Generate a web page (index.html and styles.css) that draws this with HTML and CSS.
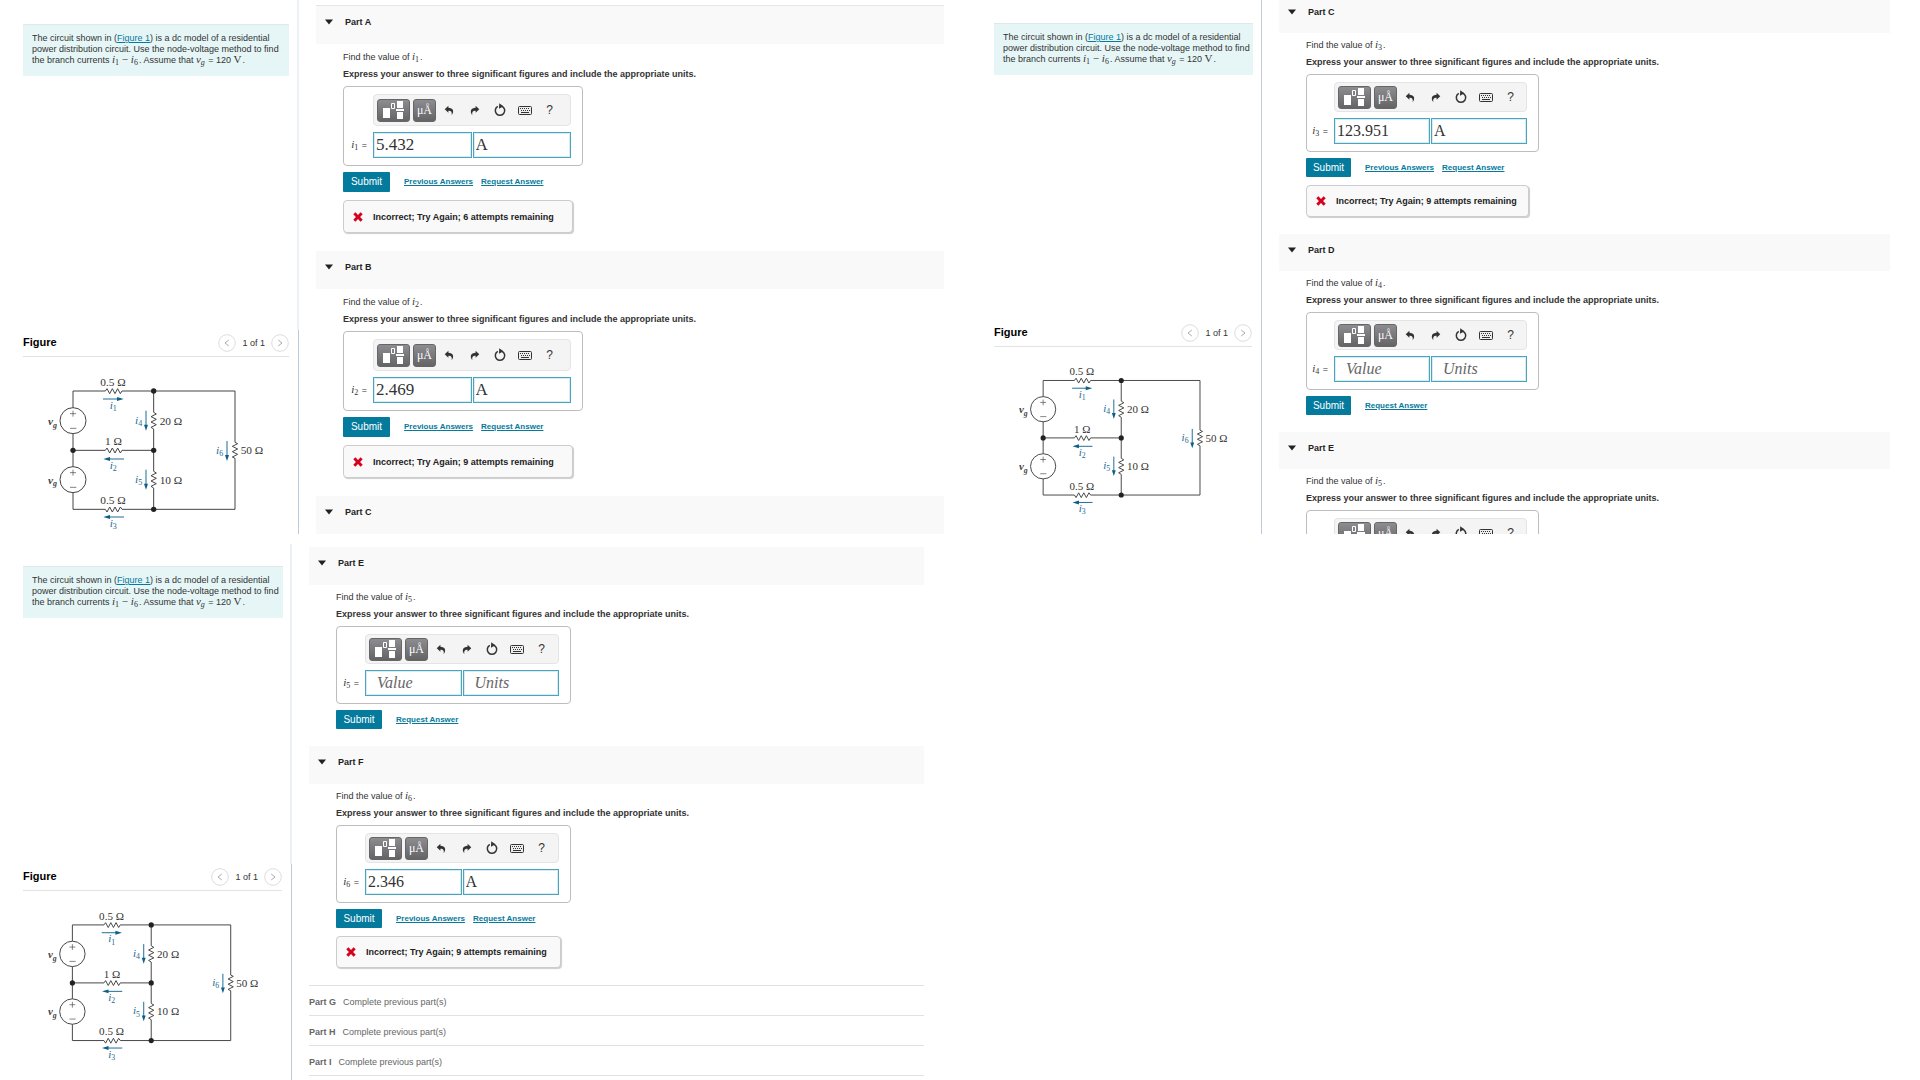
FILE: index.html
```html
<!DOCTYPE html>
<html lang="en">
<head>
<meta charset="utf-8">
<meta name="viewport" content="width=device-width, initial-scale=1">
<title>Residential power distribution circuit</title>
<link rel="stylesheet" href="styles.css">
</head>
<body>
<svg class="sprite" aria-hidden="true">
  <symbol id="caret" viewBox="0 0 8 6"><path d="M0 0.5h8L4 5.5z"/></symbol>
  <symbol id="template" viewBox="0 0 24 21">
    <path fill="#fff" d="M1 8h7v10H1zM15 1h6v7h-6zM15 12h6v7h-6zM14 9h8v2h-8z"/>
    <path fill="none" stroke="#fff" d="M9.500 3.500h3v5h-3z"/>
  </symbol>
  <symbol id="undo" viewBox="0 0 12 12"><path d="M4.800 0.800L0.800 4.600l4 3.800V6.200c2.800-.3 4.200 1.200 3.600 5C11.600 7 9.800 3 4.800 3z"/></symbol>
  <symbol id="redo" viewBox="0 0 12 12"><path d="M7.200 0.800l4 3.800-4 3.800V6.200c-2.800-.3-4.200 1.200-3.600 5C.4 7 2.200 3 7.200 3z"/></symbol>
  <symbol id="reset" viewBox="0 0 12 14"><path fill="none" stroke="currentColor" stroke-width="1.500" d="M7.800 3.200a4.700 4.700 0 1 1-4 .2"/><path d="M5.200 0.200l4.200 3-4.400 2.600z"/></symbol>
  <symbol id="keyboard" viewBox="0 0 14 10"><rect x="0.500" y="0.500" width="13" height="8" rx="1" fill="#eee" stroke="currentColor"/><path stroke="currentColor" fill="none" stroke-dasharray="1 1" d="M2 2.500h10M3 4.500h9"/><path stroke="currentColor" d="M3 6.500h8"/></symbol>
  <symbol id="cross" viewBox="0 0 10 10"><path d="M0.300 2.200L2.400 0.300 5 2.900 7.600 0.300l2.100 1.900L7.100 5l2.600 2.800-2.100 1.900L5 7.100 2.400 9.700.3 7.800 2.900 5z"/></symbol>
  <symbol id="prev" viewBox="0 0 18 18"><circle cx="9" cy="9" r="8.300" fill="none" stroke="#ddd"/><path d="M10.800 6L7 9l3.800 3" fill="none" stroke="#aaa"/></symbol>
  <symbol id="next" viewBox="0 0 18 18"><circle cx="9" cy="9" r="8.300" fill="none" stroke="#ddd"/><path d="M7.200 6L11 9l-3.800 3" fill="none" stroke="#aaa"/></symbol>
  <symbol id="wires" viewBox="140 190 660 480">
    <g fill="none" stroke="#444" stroke-width="3">
      <path d="M221 294V244H318l5-7 8 15 8-15 8 15 8-15 8 15 5-8H707V398l8 4-16 8 16 8-16 8 16 8-16 8 8 4V599H368l-5-7-8 15-8-15-8 15-8-15-8 15-5-8H221V549"/>
      <path d="M221 372V471M221 422H318l5-7 8 15 8-15 8 15 8-15 8 15 5-8H463"/>
      <path d="M463 244V308l8 5-16 8 16 8-16 8 16 8-16 8 8 5V485l8 5-16 8 16 8-16 8 16 8-16 8 8 5V599"/>
      <circle cx="221" cy="333" r="39"/><circle cx="221" cy="510" r="39"/>
      <path stroke-width="2" d="M212 312h18M221 303v18M212 356h19M212 489h18M221 480v18M212 533h19"/>
    </g>
    <g fill="#222"><circle cx="463" cy="244" r="8"/><circle cx="221" cy="422" r="8"/><circle cx="463" cy="422" r="8"/><circle cx="463" cy="599" r="8"/></g>
    <g fill="none" stroke="#1c6a93" stroke-width="3"><path d="M311 268h44M374 448h-44M374 622h-44M440 303v44M440 480v44M683 394v44"/></g>
    <path fill="#0d5f88" d="M373 268l-20-6v12zM312 448l20-6v12zM312 622l20-6v12zM440 363l-6-18h12zM440 540l-6-18h12zM683 454l-6-18h12z"/>
  </symbol>
</svg>

<main class="sheet">
  <section class="capture capture-first">
    <aside class="side">
      <div class="side-top">
        <p class="prompt">The circuit shown in (<a href="#figure-1">Figure 1</a>) is a dc model of a residential power distribution circuit. Use the node-voltage method to find the branch currents <span class="m"><i>i</i><sub>1</sub> − <i>i</i><sub>6</sub></span>. Assume that <span class="m"><i>v</i><sub><i>g</i></sub></span> = 120 <span class="m">V</span>.</p>
      </div>
      <div class="side-figure" id="figure-1">
        <div class="figure-head"><h2>Figure</h2><div class="pager"><button aria-label="Previous figure"><svg><use href="#prev"/></svg></button><span>1 of 1</span><button aria-label="Next figure"><svg><use href="#next"/></svg></button></div></div>
        <svg class="circuit" viewBox="140 190 660 480">
          <use href="#wires" x="140" y="190" width="660" height="480"/>
          <g class="ohm"><text x="303" y="228">0.5 Ω</text><text x="317" y="406">1 Ω</text><text x="303" y="582">0.5 Ω</text><text x="481" y="346">20 Ω</text><text x="481" y="522">10 Ω</text><text x="724" y="434">50 Ω</text></g>
          <g class="src"><text x="146" y="346">v<tspan class="s" dy="8">g</tspan></text><text x="146" y="522">v<tspan class="s" dy="8">g</tspan></text></g>
          <g class="cur"><text x="331" y="298">i<tspan class="n" dy="7">1</tspan></text><text x="331" y="478">i<tspan class="n" dy="7">2</tspan></text><text x="331" y="652">i<tspan class="n" dy="7">3</tspan></text><text x="407" y="342">i<tspan class="n" dy="7">4</tspan></text><text x="407" y="519">i<tspan class="n" dy="7">5</tspan></text><text x="650" y="432">i<tspan class="n" dy="7">6</tspan></text></g>
        </svg>
      </div>
    </aside>
    <div class="parts">
      <section class="part part-top">
        <h2><button class="part-toggle"><svg><use href="#caret"/></svg>Part A</button></h2>
        <div class="part-body">
          <p>Find the value of <span class="m"><i>i</i><sub>1</sub></span>.</p>
          <p class="rule">Express your answer to three significant figures and include the appropriate units.</p>
          <div class="answer">
            <div class="tools"><button class="key key-wide" aria-label="Templates"><svg><use href="#template"/></svg></button><button class="key">μÅ</button><button class="tool" aria-label="Undo"><svg><use href="#undo"/></svg></button><button class="tool" aria-label="Redo"><svg><use href="#redo"/></svg></button><button class="tool" aria-label="Reset"><svg class="tall"><use href="#reset"/></svg></button><button class="tool" aria-label="Keyboard"><svg class="wide"><use href="#keyboard"/></svg></button><button class="tool">?</button></div>
            <label for="a1"><span class="m"><i>i</i><sub>1</sub></span> =</label>
            <div class="fields"><input id="a1" type="text" value="5.432"><input type="text" aria-label="Units" value="A"></div>
          </div>
          <div class="actions"><button class="submit">Submit</button><a href="#">Previous Answers</a><a href="#">Request Answer</a></div>
          <p class="feedback"><svg><use href="#cross"/></svg>Incorrect; Try Again; 6 attempts remaining</p>
        </div>
      </section>
      <section class="part">
        <h2><button class="part-toggle"><svg><use href="#caret"/></svg>Part B</button></h2>
        <div class="part-body">
          <p>Find the value of <span class="m"><i>i</i><sub>2</sub></span>.</p>
          <p class="rule">Express your answer to three significant figures and include the appropriate units.</p>
          <div class="answer">
            <div class="tools"><button class="key key-wide" aria-label="Templates"><svg><use href="#template"/></svg></button><button class="key">μÅ</button><button class="tool" aria-label="Undo"><svg><use href="#undo"/></svg></button><button class="tool" aria-label="Redo"><svg><use href="#redo"/></svg></button><button class="tool" aria-label="Reset"><svg class="tall"><use href="#reset"/></svg></button><button class="tool" aria-label="Keyboard"><svg class="wide"><use href="#keyboard"/></svg></button><button class="tool">?</button></div>
            <label for="a2"><span class="m"><i>i</i><sub>2</sub></span> =</label>
            <div class="fields"><input id="a2" type="text" value="2.469"><input type="text" aria-label="Units" value="A"></div>
          </div>
          <div class="actions"><button class="submit">Submit</button><a href="#">Previous Answers</a><a href="#">Request Answer</a></div>
          <p class="feedback"><svg><use href="#cross"/></svg>Incorrect; Try Again; 9 attempts remaining</p>
        </div>
      </section>
      <section class="part">
        <h2><button class="part-toggle"><svg><use href="#caret"/></svg>Part C</button></h2>
      </section>
    </div>
  </section>

  <section class="capture capture-second">
    <aside class="side">
      <div class="side-top">
        <p class="prompt">The circuit shown in (<a href="#figure-2">Figure 1</a>) is a dc model of a residential power distribution circuit. Use the node-voltage method to find the branch currents <span class="m"><i>i</i><sub>1</sub> − <i>i</i><sub>6</sub></span>. Assume that <span class="m"><i>v</i><sub><i>g</i></sub></span> = 120 <span class="m">V</span>.</p>
      </div>
      <div class="side-figure" id="figure-2">
        <div class="figure-head"><h2>Figure</h2><div class="pager"><button aria-label="Previous figure"><svg><use href="#prev"/></svg></button><span>1 of 1</span><button aria-label="Next figure"><svg><use href="#next"/></svg></button></div></div>
        <svg class="circuit" viewBox="140 190 660 480">
          <use href="#wires" x="140" y="190" width="660" height="480"/>
          <g class="ohm"><text x="303" y="228">0.5 Ω</text><text x="317" y="406">1 Ω</text><text x="303" y="582">0.5 Ω</text><text x="481" y="346">20 Ω</text><text x="481" y="522">10 Ω</text><text x="724" y="434">50 Ω</text></g>
          <g class="src"><text x="146" y="346">v<tspan class="s" dy="8">g</tspan></text><text x="146" y="522">v<tspan class="s" dy="8">g</tspan></text></g>
          <g class="cur"><text x="331" y="298">i<tspan class="n" dy="7">1</tspan></text><text x="331" y="478">i<tspan class="n" dy="7">2</tspan></text><text x="331" y="652">i<tspan class="n" dy="7">3</tspan></text><text x="407" y="342">i<tspan class="n" dy="7">4</tspan></text><text x="407" y="519">i<tspan class="n" dy="7">5</tspan></text><text x="650" y="432">i<tspan class="n" dy="7">6</tspan></text></g>
        </svg>
      </div>
    </aside>
    <div class="parts">
      <section class="part">
        <h2><button class="part-toggle"><svg><use href="#caret"/></svg>Part C</button></h2>
        <div class="part-body">
          <p>Find the value of <span class="m"><i>i</i><sub>3</sub></span>.</p>
          <p class="rule">Express your answer to three significant figures and include the appropriate units.</p>
          <div class="answer">
            <div class="tools"><button class="key key-wide" aria-label="Templates"><svg><use href="#template"/></svg></button><button class="key">μÅ</button><button class="tool" aria-label="Undo"><svg><use href="#undo"/></svg></button><button class="tool" aria-label="Redo"><svg><use href="#redo"/></svg></button><button class="tool" aria-label="Reset"><svg class="tall"><use href="#reset"/></svg></button><button class="tool" aria-label="Keyboard"><svg class="wide"><use href="#keyboard"/></svg></button><button class="tool">?</button></div>
            <label for="a3"><span class="m"><i>i</i><sub>3</sub></span> =</label>
            <div class="fields"><input id="a3" type="text" value="123.951"><input type="text" aria-label="Units" value="A"></div>
          </div>
          <div class="actions"><button class="submit">Submit</button><a href="#">Previous Answers</a><a href="#">Request Answer</a></div>
          <p class="feedback"><svg><use href="#cross"/></svg>Incorrect; Try Again; 9 attempts remaining</p>
        </div>
      </section>
      <section class="part">
        <h2><button class="part-toggle"><svg><use href="#caret"/></svg>Part D</button></h2>
        <div class="part-body">
          <p>Find the value of <span class="m"><i>i</i><sub>4</sub></span>.</p>
          <p class="rule">Express your answer to three significant figures and include the appropriate units.</p>
          <div class="answer">
            <div class="tools"><button class="key key-wide" aria-label="Templates"><svg><use href="#template"/></svg></button><button class="key">μÅ</button><button class="tool" aria-label="Undo"><svg><use href="#undo"/></svg></button><button class="tool" aria-label="Redo"><svg><use href="#redo"/></svg></button><button class="tool" aria-label="Reset"><svg class="tall"><use href="#reset"/></svg></button><button class="tool" aria-label="Keyboard"><svg class="wide"><use href="#keyboard"/></svg></button><button class="tool">?</button></div>
            <label for="a4"><span class="m"><i>i</i><sub>4</sub></span> =</label>
            <div class="fields"><input id="a4" type="text" placeholder="Value"><input type="text" aria-label="Units" placeholder="Units"></div>
          </div>
          <div class="actions"><button class="submit">Submit</button><a href="#">Request Answer</a></div>
        </div>
      </section>
      <section class="part">
        <h2><button class="part-toggle"><svg><use href="#caret"/></svg>Part E</button></h2>
        <div class="part-body">
          <p>Find the value of <span class="m"><i>i</i><sub>5</sub></span>.</p>
          <p class="rule">Express your answer to three significant figures and include the appropriate units.</p>
          <div class="answer">
            <div class="tools"><button class="key key-wide" aria-label="Templates"><svg><use href="#template"/></svg></button><button class="key">μÅ</button><button class="tool" aria-label="Undo"><svg><use href="#undo"/></svg></button><button class="tool" aria-label="Redo"><svg><use href="#redo"/></svg></button><button class="tool" aria-label="Reset"><svg class="tall"><use href="#reset"/></svg></button><button class="tool" aria-label="Keyboard"><svg class="wide"><use href="#keyboard"/></svg></button><button class="tool">?</button></div>
          </div>
        </div>
      </section>
    </div>
  </section>

  <section class="capture capture-third">
    <aside class="side">
      <div class="side-top">
        <p class="prompt">The circuit shown in (<a href="#figure-3">Figure 1</a>) is a dc model of a residential power distribution circuit. Use the node-voltage method to find the branch currents <span class="m"><i>i</i><sub>1</sub> − <i>i</i><sub>6</sub></span>. Assume that <span class="m"><i>v</i><sub><i>g</i></sub></span> = 120 <span class="m">V</span>.</p>
      </div>
      <div class="side-figure" id="figure-3">
        <div class="figure-head"><h2>Figure</h2><div class="pager"><button aria-label="Previous figure"><svg><use href="#prev"/></svg></button><span>1 of 1</span><button aria-label="Next figure"><svg><use href="#next"/></svg></button></div></div>
        <svg class="circuit" viewBox="140 190 660 480">
          <use href="#wires" x="140" y="190" width="660" height="480"/>
          <g class="ohm"><text x="303" y="228">0.5 Ω</text><text x="317" y="406">1 Ω</text><text x="303" y="582">0.5 Ω</text><text x="481" y="346">20 Ω</text><text x="481" y="522">10 Ω</text><text x="724" y="434">50 Ω</text></g>
          <g class="src"><text x="146" y="346">v<tspan class="s" dy="8">g</tspan></text><text x="146" y="522">v<tspan class="s" dy="8">g</tspan></text></g>
          <g class="cur"><text x="331" y="298">i<tspan class="n" dy="7">1</tspan></text><text x="331" y="478">i<tspan class="n" dy="7">2</tspan></text><text x="331" y="652">i<tspan class="n" dy="7">3</tspan></text><text x="407" y="342">i<tspan class="n" dy="7">4</tspan></text><text x="407" y="519">i<tspan class="n" dy="7">5</tspan></text><text x="650" y="432">i<tspan class="n" dy="7">6</tspan></text></g>
        </svg>
      </div>
    </aside>
    <div class="parts">
      <section class="part">
        <h2><button class="part-toggle"><svg><use href="#caret"/></svg>Part E</button></h2>
        <div class="part-body">
          <p>Find the value of <span class="m"><i>i</i><sub>5</sub></span>.</p>
          <p class="rule">Express your answer to three significant figures and include the appropriate units.</p>
          <div class="answer">
            <div class="tools"><button class="key key-wide" aria-label="Templates"><svg><use href="#template"/></svg></button><button class="key">μÅ</button><button class="tool" aria-label="Undo"><svg><use href="#undo"/></svg></button><button class="tool" aria-label="Redo"><svg><use href="#redo"/></svg></button><button class="tool" aria-label="Reset"><svg class="tall"><use href="#reset"/></svg></button><button class="tool" aria-label="Keyboard"><svg class="wide"><use href="#keyboard"/></svg></button><button class="tool">?</button></div>
            <label for="a5"><span class="m"><i>i</i><sub>5</sub></span> =</label>
            <div class="fields"><input id="a5" type="text" placeholder="Value"><input type="text" aria-label="Units" placeholder="Units"></div>
          </div>
          <div class="actions"><button class="submit">Submit</button><a href="#">Request Answer</a></div>
        </div>
      </section>
      <section class="part">
        <h2><button class="part-toggle"><svg><use href="#caret"/></svg>Part F</button></h2>
        <div class="part-body">
          <p>Find the value of <span class="m"><i>i</i><sub>6</sub></span>.</p>
          <p class="rule">Express your answer to three significant figures and include the appropriate units.</p>
          <div class="answer">
            <div class="tools"><button class="key key-wide" aria-label="Templates"><svg><use href="#template"/></svg></button><button class="key">μÅ</button><button class="tool" aria-label="Undo"><svg><use href="#undo"/></svg></button><button class="tool" aria-label="Redo"><svg><use href="#redo"/></svg></button><button class="tool" aria-label="Reset"><svg class="tall"><use href="#reset"/></svg></button><button class="tool" aria-label="Keyboard"><svg class="wide"><use href="#keyboard"/></svg></button><button class="tool">?</button></div>
            <label for="a6"><span class="m"><i>i</i><sub>6</sub></span> =</label>
            <div class="fields"><input id="a6" type="text" value="2.346"><input type="text" aria-label="Units" value="A"></div>
          </div>
          <div class="actions"><button class="submit">Submit</button><a href="#">Previous Answers</a><a href="#">Request Answer</a></div>
          <p class="feedback"><svg><use href="#cross"/></svg>Incorrect; Try Again; 9 attempts remaining</p>
        </div>
      </section>
      <ul class="locked">
        <li><b>Part G</b><span>Complete previous part(s)</span></li>
        <li><b>Part H</b><span>Complete previous part(s)</span></li>
        <li><b>Part I</b><span>Complete previous part(s)</span></li>
      </ul>
    </div>
  </section>
</main>
</body>
</html>
```

FILE: styles.css
```css
* { box-sizing: border-box; }

body {
  margin: 0;
  background: #fff;
  color: #333;
  font: 9px/12px "Liberation Sans", Arial, sans-serif;
}

h2, p, ul { margin: 0; padding: 0; }
button { margin: 0; padding: 0; border: 0; background: none; color: inherit; font: inherit; }
a { color: #067a9c; }
.sprite { display: none; }

.m { padding-right: 1px; font-family: "Liberation Serif", "Times New Roman", serif; font-size: 11px; line-height: 0; }
.m sub { font-size: 8px; line-height: 0; vertical-align: -2px; }

.sheet { display: grid; grid-template-columns: 1fr 1fr; row-gap: 10px; }

/* Spacing that differs between the three views */
.capture {
  --side: 300px;
  --side-left: 23px;
  --head: 38px;
  --lead: 6px;
  --bar: 30px;
  --submit: 19px;
  --note: 32px;
  --after: 17px;
  --label: 28px;
  --box: 235px;
  --tool: 25px;
  --value: 16px;
  display: flex;
  min-width: 0;
}
.capture-first { --side: 299px; --lead: 7px; --bar: 32px; --submit: 20px; --note: 33px; --after: 18px; --label: 29px; --box: 240px; --value: 17px; }
.capture-second { --side: 302px; --side-left: 34px; --head: 37px; --label: 27px; --box: 233px; contain: size; overflow: hidden; }
.capture-third { --side: 292px; }

/* Left column */
.side { flex: none; width: var(--side); display: flex; flex-direction: column; }
.side-top { flex: 1; padding: 24px 8px 0 var(--side-left); border-right: 2px solid #ebf1f5; }
.capture-second .side-top { padding-top: 23px; border-right: 1px solid #c3ccd6; }
.capture-third .side-top { padding-top: 22px; padding-right: 7px; }
.prompt {
  padding: 8px 2px 10px 9px;
  border-top: 1px solid #dde9ea;
  background: #e6f6f7;
  line-height: 11px;
}
.side-figure { padding: 4px 9px 0 var(--side-left); border-right: 1px solid #b9cbdd; }
.capture-second .side-figure, .capture-third .side-figure { padding-bottom: 16px; }
.figure-head {
  display: flex;
  justify-content: space-between;
  align-items: center;
  height: 23px;
  padding-bottom: 4px;
  border-bottom: 1px solid #e3e3e3;
}
.figure-head h2 { padding-bottom: 3px; color: #000; font-size: 11px; line-height: 14px; }
.pager { display: flex; align-items: center; gap: 6px; }
.pager button, .pager svg { display: block; width: 18px; height: 18px; }
.circuit { display: block; width: 220px; height: 160px; margin: 16px 0 0 23px; }
.capture-first .circuit { margin-bottom: 1px; }
.capture-second .circuit { width: 213px; height: 155px; }
.capture-third .circuit { width: 215px; height: 157px; }
.circuit text { font: 34px "Liberation Serif", "Times New Roman", serif; }
.ohm { fill: #333; }
.circuit .src text, .circuit .cur text { font-style: italic; }
.circuit .src text { font-weight: bold; }
.src { fill: #444; }
.cur { fill: #1c6a93; }
.circuit .s { font-size: 24px; }
.circuit .n { font-size: 24px; font-style: normal; }

/* Question parts */
.parts { flex: 1; min-width: 0; padding: 5px 16px 0 17px; }
.capture-second .parts { margin-top: -4px; padding: 0 30px 0 17px; }
.capture-third .parts { padding: 3px 36px 4px 17px; }
.part-top { border-top: 1px solid #e6e6e6; }
.part h2 { height: var(--head); padding: 10px 0 0 9px; background: #f9f9f9; font-size: 9px; line-height: 12px; }
.part-toggle { display: flex; align-items: center; gap: 12px; color: #222; }
.part-toggle svg { width: 8px; height: 6px; }
.part-body { padding: var(--lead) 0 var(--after) 27px; }
.part-body .rule { margin-top: 5px; font-weight: bold; }

.answer {
  display: grid;
  grid-template-columns: var(--label) minmax(0, 1fr);
  row-gap: 6px;
  width: var(--box);
  margin-top: 6px;
  padding: 7px 11px 7px 0;
  border: 1px solid #bdbdbd;
  border-radius: 4px;
}
.tools {
  grid-column: 2;
  display: flex;
  align-items: center;
  height: var(--bar);
  padding-left: 3px;
  border: 1px solid #e4e4e4;
  border-radius: 4px;
  background: #f4f4f4;
}
.key {
  flex: none;
  width: 23px;
  height: 23px;
  margin-right: 1px;
  border: 1px solid #666;
  border-radius: 3px;
  background: linear-gradient(#8d8d91, #646467);
  color: #fff;
  font: 12px/20px "Liberation Serif", serif;
}
.key-wide { width: 33px; margin-right: 3px; }
.key svg { display: block; width: 24px; height: 21px; margin: 0 auto; }
.tool { display: flex; justify-content: center; align-items: center; width: var(--tool); height: 22px; color: #333; font-size: 12px; }
.tool svg { width: 11px; height: 11px; }
.tool .tall { width: 12px; height: 14px; }
.tool .wide { width: 14px; height: 10px; margin-top: 2px; }
.tools svg, .part-toggle svg, .feedback svg { fill: currentColor; }
.answer label { align-self: center; padding-right: 6px; text-align: right; white-space: nowrap; }
.fields { display: flex; gap: 1px; }
.fields input {
  flex: 1;
  min-width: 0;
  height: 26px;
  padding: 0 2px;
  border: 1px solid #4ba3bd;
  box-shadow: inset 0 0 0 1px #d5edf3;
  background: #fff;
  color: #333;
  font: var(--value)/20px "Liberation Serif", "Times New Roman", serif;
}
.fields input:placeholder-shown { padding-left: 11px; }
.fields input::placeholder { color: #666; font-style: italic; opacity: 1; }

.actions { display: flex; align-items: center; gap: 8px; margin-top: 6px; font-size: 8px; font-weight: bold; }
.submit {
  width: calc(var(--label) + 18px);
  height: var(--submit);
  margin-right: 6px;
  border-radius: 1px;
  background: #047a9c;
  color: #fff;
  font-size: 10px;
  font-weight: normal;
}
.feedback {
  display: flex;
  align-items: center;
  width: calc(var(--box) - 10px);
  height: var(--note);
  margin-top: 8px;
  padding-left: 9px;
  border: 1px solid #ccc;
  border-radius: 4px;
  box-shadow: 1px 1px 1px #ccc;
  background: #f9f9f9;
  color: #222;
  font-weight: bold;
}
.feedback svg { width: 10px; height: 10px; margin-right: 10px; color: #d6001f; }

.locked { list-style: none; border-bottom: 1px solid #e2e2e2; color: #666; }
.locked li { display: flex; gap: 7px; height: 30px; padding-top: 9px; border-top: 1px solid #e2e2e2; line-height: 14px; }
```
